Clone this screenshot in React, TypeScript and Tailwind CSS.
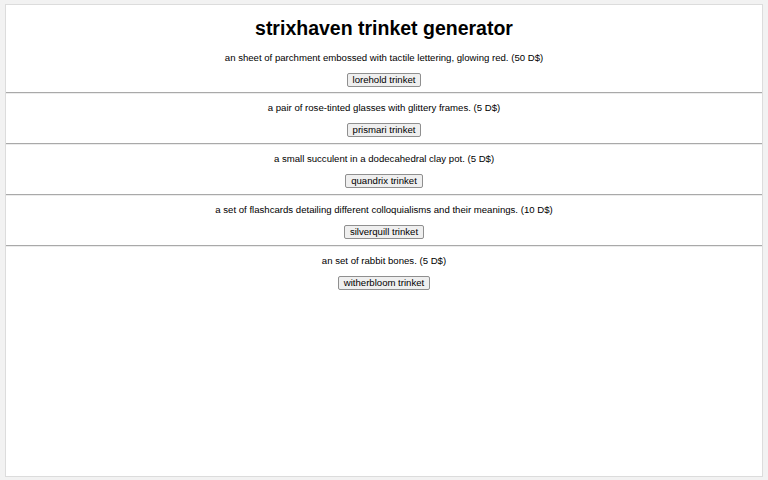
import React from "react";

const trinkets = [
  { text: "an sheet of parchment embossed with tactile lettering, glowing red. (50 D$)", label: "lorehold trinket" },
  { text: "a pair of rose-tinted glasses with glittery frames. (5 D$)", label: "prismari trinket" },
  { text: "a small succulent in a dodecahedral clay pot. (5 D$)", label: "quandrix trinket" },
  { text: "a set of flashcards detailing different colloquialisms and their meanings. (10 D$)", label: "silverquill trinket" },
  { text: "an set of rabbit bones. (5 D$)", label: "witherbloom trinket" },
];

export default function App() {
  return (
    <div
      className="w-[768px] h-[480px] bg-[#f2f2f2] pt-[4px] pb-[3px] pl-[5px] pr-[5px] text-black"
      style={{ fontFamily: '"Liberation Sans", Arial, sans-serif' }}
    >
      <div className="h-full bg-white border border-[#dcdcdc] flex flex-col">
        <h1 className="text-[19.5px] leading-[24px] font-bold text-center mt-[11px]">
          strixhaven trinket generator
        </h1>
        {trinkets.map((t, i) => (
          <div key={t.label} className="flex flex-col items-center">
            <p className={`text-[9.6px] leading-[12px] text-center ${i === 0 ? "mt-[12px]" : "mt-[8px]"}`}>
              {t.text}
            </p>
            <button className="mt-[9px] h-[14px] px-[5px] text-[9.6px] leading-[12px] bg-[#efefef] border border-[#8f8f8f] rounded-[2px]">
              {t.label}
            </button>
            {i < trinkets.length - 1 && (
              <div
                className={`self-stretch border-t border-[#a9a9a9] border-b border-b-[#ececec] ${i === 0 ? "mt-[5px]" : "mt-[6px]"}`}
              />
            )}
          </div>
        ))}
      </div>
    </div>
  );
}
